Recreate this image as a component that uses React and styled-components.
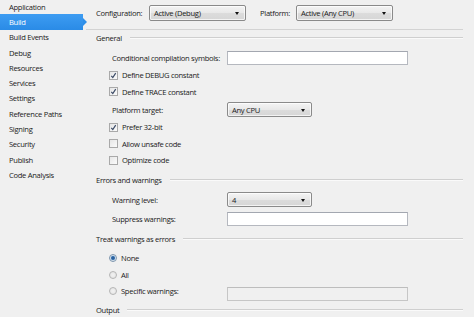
import React from "react";
import styled, { createGlobalStyle } from "styled-components";

const Global = createGlobalStyle`
  html, body { margin: 0; padding: 0; background: #f0f0f0; }
  body { font-family: "Open Sans", "Noto Sans", sans-serif; font-size: 7.6px; letter-spacing: -0.3px; color: #1a1a1a; }
  * { box-sizing: border-box; }
`;

const Shell = styled.div`
  display: flex;
  width: 474px;
  height: 317px;
  overflow: hidden;
  background: #f0f0f0;
`;

const Nav = styled.nav`
  width: 86px;
  flex: none;
  display: flex;
  flex-direction: column;
  margin-top: -1px;
`;

const NavItem = styled.div`
  position: relative;
  height: 15.3px;
  width: 83px;
  flex: none;
  display: flex;
  align-items: center;
  padding-left: 9px;
  white-space: nowrap;
  color: ${(p) => (p.$active ? "#ffffff" : "#1a1a1a")};
  background: ${(p) => (p.$active ? "linear-gradient(#3d9cf2, #2a8be6)" : "transparent")};
  &::after {
    content: "";
    display: ${(p) => (p.$active ? "block" : "none")};
    position: absolute;
    right: -4px;
    top: 50%;
    margin-top: -4px;
    border-left: 4px solid #2e8fe9;
    border-top: 4px solid transparent;
    border-bottom: 4px solid transparent;
  }
`;

const Main = styled.main`
  flex: 1;
  display: flex;
  flex-direction: column;
  padding: 0 11px 0 10px;
  min-width: 0;
`;

const TopBar = styled.div`
  height: 30px;
  flex: none;
  display: flex;
  align-items: center;
  padding-bottom: 4px;
  border-bottom: 1px solid #d3d3d3;
  margin-left: -10px;
  padding-left: 10px;
`;

const TopLabel = styled.span`
  width: ${(p) => p.$w}px;
  margin-left: ${(p) => p.$ml || 0}px;
  flex: none;
  white-space: nowrap;
`;

const Select = styled.div`
  width: ${(p) => p.$w}px;
  height: ${(p) => p.$h || 15}px;
  flex: none;
  display: flex;
  align-items: center;
  padding-left: 4px;
  border: 1px solid #8a8a8a;
  border-radius: 2px;
  background: linear-gradient(#f4f4f4, #e8e8e8 50%, #dcdcdc 51%, #d6d6d6);
  box-shadow: inset 0 0 0 1px rgba(255, 255, 255, 0.7);
  position: relative;
  white-space: nowrap;
  &::after {
    content: "";
    position: absolute;
    right: 6px;
    top: 50%;
    margin-top: -1px;
    border-top: 3px solid #111;
    border-left: 2.5px solid transparent;
    border-right: 2.5px solid transparent;
  }
`;

const SectionHeader = styled.div`
  height: 16px;
  flex: none;
  display: flex;
  align-items: center;
  gap: 8px;
  margin-top: ${(p) => p.$mt || 0}px;
  margin-bottom: ${(p) => p.$mb ?? 2}px;
  white-space: nowrap;
  &::after {
    content: "";
    flex: 1;
    height: 0;
    border-top: 1px solid #cfcfcf;
    border-bottom: 1px solid #fafafa;
  }
`;

const FieldRow = styled.div`
  height: ${(p) => p.$h || 19}px;
  flex: none;
  display: flex;
  align-items: center;
  padding-left: 16px;
`;

const FieldLabel = styled.span`
  width: 115px;
  flex: none;
  white-space: nowrap;
`;

const TextBox = styled.div`
  width: 181px;
  height: 14px;
  flex: none;
  background: ${(p) => (p.$disabled ? "#f0f0f0" : "#ffffff")};
  border: 1px solid ${(p) => (p.$disabled ? "#c6c6c6" : "#b5b8bf")};
  border-top-color: ${(p) => (p.$disabled ? "#bdbdbd" : "#a3a7b0")};
`;

const CheckRow = styled.div`
  height: 16.5px;
  flex: none;
  display: flex;
  align-items: center;
  gap: 4px;
  padding-left: 13px;
  white-space: nowrap;
`;

const CheckBox = styled.span`
  width: 9px;
  height: 9px;
  flex: none;
  border: 1px solid #a9a9a9;
  background: linear-gradient(135deg, #e6e6e6, #fbfbfb);
  display: flex;
  align-items: center;
  justify-content: center;
`;

const Radio = styled.span`
  width: 8px;
  height: 8px;
  flex: none;
  border-radius: 50%;
  border: 1px solid ${(p) => (p.$on ? "#7c95ad" : "#b5b5b5")};
  background: ${(p) =>
    p.$on
      ? "radial-gradient(circle, #1f4f86 0, #3f77b4 1.6px, #dfe8f1 2.6px)"
      : "radial-gradient(circle, #f2f2f2, #e2e2e2)"};
`;

const SpecificRow = styled.div`
  height: 18px;
  flex: none;
  display: flex;
  align-items: flex-start;
  padding-left: 13px;
`;

const RadioLabel = styled.div`
  width: 118px;
  height: 16px;
  flex: none;
  display: flex;
  align-items: center;
  gap: 4px;
  white-space: nowrap;
`;

const LowerBox = styled(TextBox)`
  margin-top: 4px;
`;

const Check = () => (
  <svg width="7" height="7" viewBox="0 0 7 7">
    <path d="M1.3 3.9 L2.8 5.6 L5.7 1.2" fill="none" stroke="#3b4a66" strokeWidth="1.2" />
  </svg>
);

const navItems = [
  "Application",
  "Build",
  "Build Events",
  "Debug",
  "Resources",
  "Services",
  "Settings",
  "Reference Paths",
  "Signing",
  "Security",
  "Publish",
  "Code Analysis",
];

export default function App() {
  return (
    <Shell>
      <Global />
      <Nav>
        {navItems.map((n) => (
          <NavItem key={n} $active={n === "Build"}>
            {n}
          </NavItem>
        ))}
      </Nav>
      <Main>
        <TopBar>
          <TopLabel $w={53}>Configuration:</TopLabel>
          <Select $w={97} $h={16}>Active (Debug)</Select>
          <TopLabel $w={36} $ml={14}>Platform:</TopLabel>
          <Select $w={97} $h={16}>Active (Any CPU)</Select>
        </TopBar>

        <SectionHeader>General</SectionHeader>
        <FieldRow>
          <FieldLabel>Conditional compilation symbols:</FieldLabel>
          <TextBox />
        </FieldRow>
        <CheckRow>
          <CheckBox><Check /></CheckBox>Define DEBUG constant
        </CheckRow>
        <CheckRow>
          <CheckBox><Check /></CheckBox>Define TRACE constant
        </CheckRow>
        <FieldRow>
          <FieldLabel>Platform target:</FieldLabel>
          <Select $w={85}>Any CPU</Select>
        </FieldRow>
        <CheckRow>
          <CheckBox><Check /></CheckBox>Prefer 32-bit
        </CheckRow>
        <CheckRow>
          <CheckBox />Allow unsafe code
        </CheckRow>
        <CheckRow>
          <CheckBox />Optimize code
        </CheckRow>

        <SectionHeader $mt={3.5}>Errors and warnings</SectionHeader>
        <FieldRow>
          <FieldLabel>Warning level:</FieldLabel>
          <Select $w={85}>4</Select>
        </FieldRow>
        <FieldRow>
          <FieldLabel>Suppress warnings:</FieldLabel>
          <TextBox />
        </FieldRow>

        <SectionHeader $mt={3} $mb={3}>Treat warnings as errors</SectionHeader>
        <CheckRow>
          <Radio $on />None
        </CheckRow>
        <CheckRow>
          <Radio />All
        </CheckRow>
        <SpecificRow>
          <RadioLabel>
            <Radio />Specific warnings:
          </RadioLabel>
          <LowerBox $disabled />
        </SpecificRow>

        <SectionHeader $mt={1}>Output</SectionHeader>
      </Main>
    </Shell>
  );
}
